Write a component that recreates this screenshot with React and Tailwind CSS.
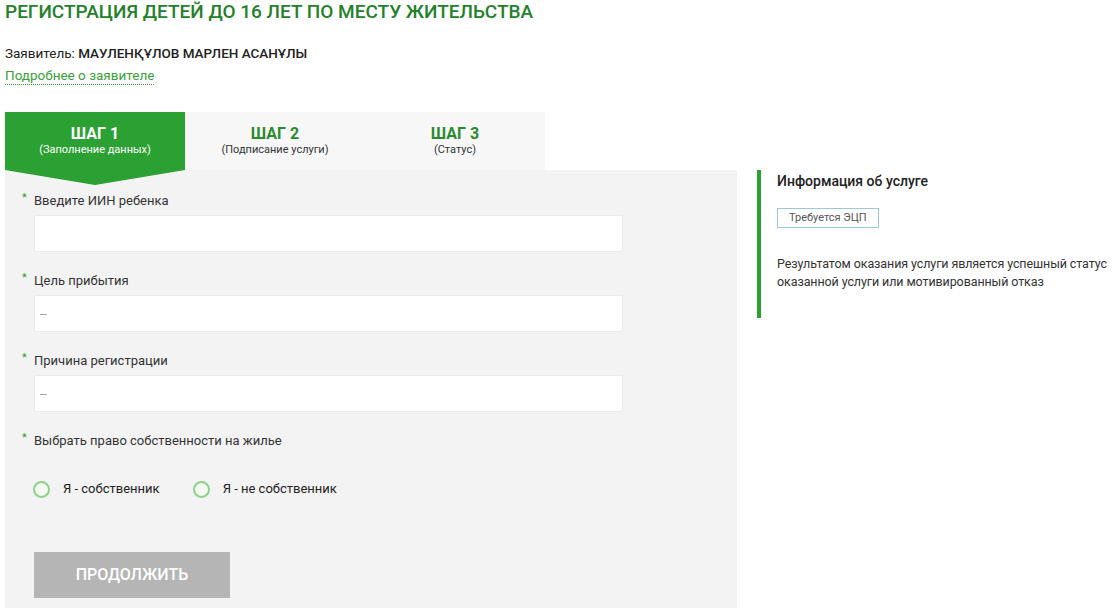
export default function App() {
  return (
    <div
      className="min-h-screen bg-white text-[#222]"
      style={{ fontFamily: "Roboto, 'Noto Sans', sans-serif" }}
    >
      {/* Header */}
      <div className="pl-[5px]">
        <h1 className="text-[19px] leading-[24px] font-medium text-[#23812b]">
          РЕГИСТРАЦИЯ ДЕТЕЙ ДО 16 ЛЕТ ПО МЕСТУ ЖИТЕЛЬСТВА
        </h1>
        <div className="mt-[19px] text-[13.5px] leading-[20px]">
          Заявитель: <span className="font-medium">МАУЛЕНҚҰЛОВ МАРЛЕН АСАНҰЛЫ</span>
        </div>
        <a className="inline-block text-[13.5px] leading-[17px] -mt-[2px] text-[#3aa03a] border-b border-dotted border-[#3aa03a]">
          Подробнее о заявителе
        </a>
      </div>

      <div className="flex mt-[25px]">
        {/* Left column */}
        <div className="w-[732px] ml-[5px] shrink-0">
          {/* Steps */}
          <div className="flex w-[540px] h-[58px] bg-[#f7f7f7] relative z-10">
            <div className="relative w-[180px] bg-[#2ba033] text-white flex flex-col items-center justify-center">
              <div className="text-[16px] leading-[18px] font-bold">ШАГ 1</div>
              <div className="text-[11px] leading-[14px]">(Заполнение данных)</div>
              <svg
                className="absolute left-0 top-full"
                width="180"
                height="15"
                viewBox="0 0 180 15"
              >
                <polygon points="0,0 180,0 90,15" fill="#2ba033" />
              </svg>
            </div>
            <div className="w-[180px] flex flex-col items-center justify-center text-[#2a8a2f]">
              <div className="text-[16px] leading-[18px] font-bold">ШАГ 2</div>
              <div className="text-[11px] leading-[14px] text-[#333]">(Подписание услуги)</div>
            </div>
            <div className="w-[180px] flex flex-col items-center justify-center text-[#2a8a2f]">
              <div className="text-[16px] leading-[18px] font-bold">ШАГ 3</div>
              <div className="text-[11px] leading-[14px] text-[#333]">(Статус)</div>
            </div>
          </div>

          {/* Form */}
          <div className="bg-[#f3f3f3] h-[440px] pt-[22px] pl-[17px]">
            <Field label="Введите ИИН ребенка" placeholder="" />
            <Field label="Цель прибытия" placeholder="--" />
            <Field label="Причина регистрации" placeholder="--" />

            <Label text="Выбрать право собственности на жилье" />
            <div className="flex items-center mt-[30px] pl-[11px] text-[13px] leading-[18px]">
              <label className="flex items-center gap-[13px]">
                <span className="w-[17px] h-[17px] rounded-full border-2 border-[#8ed08e] bg-[#f4fbf0]" />
                Я - собственник
              </label>
              <label className="flex items-center gap-[13px] ml-[33px]">
                <span className="w-[17px] h-[17px] rounded-full border-2 border-[#8ed08e] bg-[#f4fbf0]" />
                Я - не собственник
              </label>
            </div>

            <button className="mt-[54px] ml-[12px] w-[196px] h-[46px] bg-[#b5b5b5] text-white text-[16px] font-medium">
              ПРОДОЛЖИТЬ
            </button>
          </div>
        </div>

        {/* Right column */}
        <div className="mt-[58px] ml-[20px] h-[148px] border-l-4 border-[#2ba033] pl-[16px] pt-[1px]">
          <div className="text-[14px] leading-[20px] font-medium text-[#222]">
            Информация об услуге
          </div>
          <div className="mt-[17px] inline-block border border-[#9cc8da] px-[11px] h-[20px] text-[11px] leading-[18px] text-[#555]">
            Требуется ЭЦП
          </div>
          <p className="mt-[27px] text-[12.5px] leading-[18px] tracking-[-0.1px] text-[#333] whitespace-nowrap">
            Результатом оказания услуги является успешный статус
            <br />
            оказанной услуги или мотивированный отказ
          </p>
        </div>
      </div>
    </div>
  );
}

function Label({ text }) {
  return (
    <div className="flex items-start text-[13px] leading-[18px] text-[#333]">
      <span className="w-[12px] text-[#2ba033] text-[11px] leading-[12px]">*</span>
      <span>{text}</span>
    </div>
  );
}

function Field({ label, placeholder }) {
  return (
    <div className="mb-[20px]">
      <Label text={label} />
      <div className="mt-[5px] ml-[12px] w-[589px] h-[37px] bg-white border border-[#ebebeb] flex items-center px-[5px] text-[12px] text-[#999]">
        {placeholder}
      </div>
    </div>
  );
}
